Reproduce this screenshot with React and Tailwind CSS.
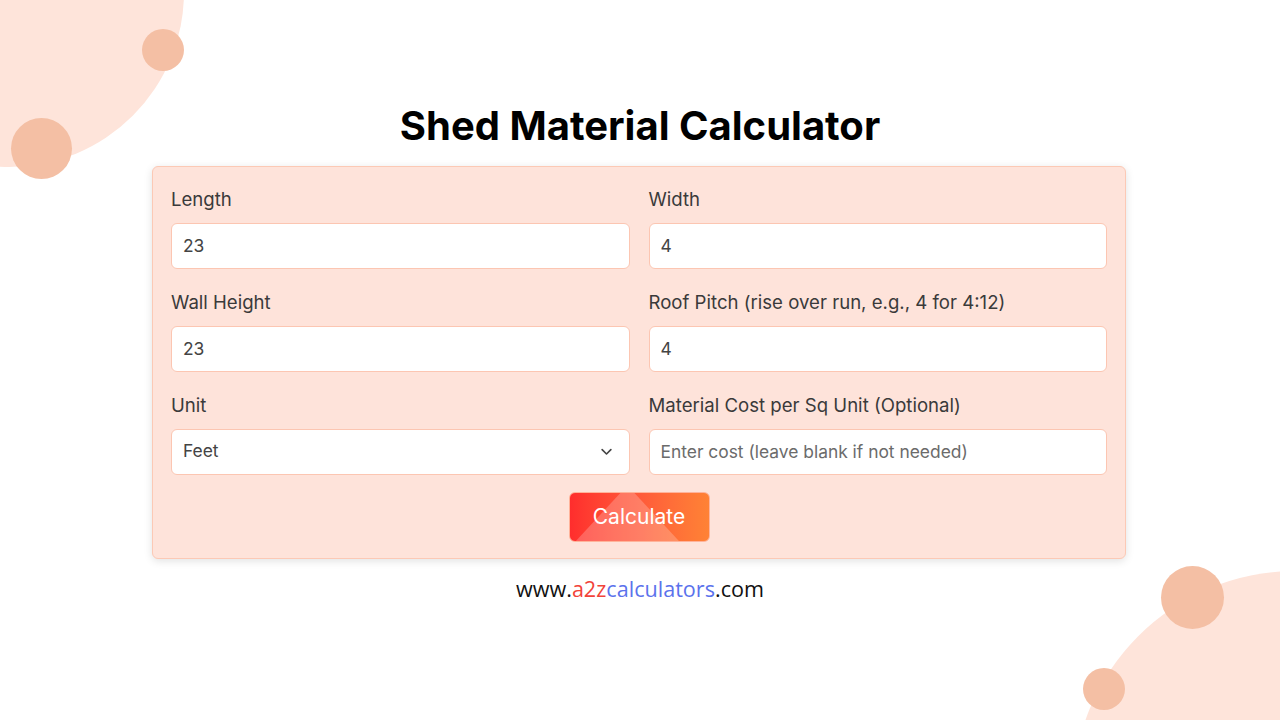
import React, { useState } from 'react';

function Field({ label, value, placeholder, onChange }) {
    return (
        <div className="flex flex-col">
            <label className="mb-[12px] h-[24px] text-[18.6px] leading-[24px] text-[#3a3a3a]">{label}</label>
            <input
                type="text"
                value={value}
                placeholder={placeholder}
                onChange={e => onChange(e.target.value)}
                className="h-[46px] w-full rounded-[6px] border border-[#fcc6b2] bg-white px-[11px] pb-[2px] text-[17.4px] text-[#444] outline-none placeholder:text-[#6b6b6b]"
            />
        </div>
    );
}

function App() {
    const [length, setLength] = useState('23');
    const [width, setWidth] = useState('4');
    const [height, setHeight] = useState('23');
    const [pitch, setPitch] = useState('4');
    const [unit, setUnit] = useState('Feet');
    const [cost, setCost] = useState('');

    return (
        <div className="relative h-[720px] w-full overflow-hidden bg-white" style={{ fontFamily: 'Inter, "Noto Sans", sans-serif' }}>
            {/* decoration */}
            <div className="absolute left-[-166px] top-[-183px] h-[350px] w-[350px] rounded-full bg-[#fee4da]" />
            <div className="absolute left-[142px] top-[29px] h-[42px] w-[42px] rounded-full bg-[#f4bfa4]" />
            <div className="absolute left-[11px] top-[118px] h-[61px] w-[61px] rounded-full bg-[#f4bfa4]" />
            <div className="absolute left-[1073px] top-[571px] h-[445px] w-[445px] rounded-full bg-[#fee4da]" />
            <div className="absolute left-[1161px] top-[566px] h-[63px] w-[63px] rounded-full bg-[#f4bfa4]" />
            <div className="absolute left-[1083px] top-[668px] h-[42px] w-[42px] rounded-full bg-[#f4bfa4]" />

            <div className="relative flex flex-col items-center pt-[102px]">
                <h1 className="h-[48px] text-[40px] font-bold leading-[48px] text-black">Shed Material Calculator</h1>

                <div className="mr-[2px] mt-[16px] w-[974px] rounded-[6px] border border-[#fcc9b5] bg-[#fee3da] px-[18px] pb-[16px] pt-[20px] shadow-[0_2px_8px_rgba(0,0,0,0.12)]">
                    <div className="grid grid-cols-2 gap-x-[19px] gap-y-[21px]">
                        <Field label="Length" value={length} onChange={setLength} />
                        <Field label="Width" value={width} onChange={setWidth} />
                        <Field label="Wall Height" value={height} onChange={setHeight} />
                        <Field label="Roof Pitch (rise over run, e.g., 4 for 4:12)" value={pitch} onChange={setPitch} />
                        <div className="flex flex-col">
                            <label className="mb-[12px] h-[24px] text-[18.6px] leading-[24px] text-[#3a3a3a]">Unit</label>
                            <div className="relative">
                                <select
                                    value={unit}
                                    onChange={e => setUnit(e.target.value)}
                                    className="h-[46px] w-full appearance-none rounded-[6px] border border-[#fcc6b2] bg-white px-[11px] pb-[2px] text-[17.4px] text-[#444] outline-none"
                                >
                                    <option>Feet</option>
                                    <option>Meters</option>
                                </select>
                                <svg className="pointer-events-none absolute right-[16px] top-[15px]" width="15" height="15" viewBox="0 0 24 24" fill="none" stroke="#444" strokeWidth="2.6" strokeLinecap="round" strokeLinejoin="round">
                                    <path d="M5 9l7 7 7-7" />
                                </svg>
                            </div>
                        </div>
                        <Field label="Material Cost per Sq Unit (Optional)" value={cost} placeholder="Enter cost (leave blank if not needed)" onChange={setCost} />
                    </div>

                    <div className="mt-[17px] flex justify-center">
                        <button className="relative h-[50px] w-[141px] overflow-hidden rounded-[6px] border border-[#ffb39a] bg-gradient-to-r from-[#ff2d2d] via-[#ff5a3a] to-[#ff8235] text-[21px] text-white">
                            <svg className="absolute inset-0" width="141" height="50" viewBox="0 0 140 49" preserveAspectRatio="none">
                                <polygon points="50,0 64,0 110,49 4,49" fill="rgba(255,255,255,0.22)" />
                            </svg>
                            <span className="relative">Calculate</span>
                        </button>
                    </div>
                </div>

                <p className="mt-[18px] h-[24px] text-[21.6px] leading-[24px] text-[#111]" style={{ fontFamily: '"Open Sans", sans-serif' }}>
                    www.<span className="text-[#f2433a]">a2z</span><span className="text-[#5b72ec]">calculators</span>.com
                </p>
            </div>
        </div>
    );
}

export default App;
